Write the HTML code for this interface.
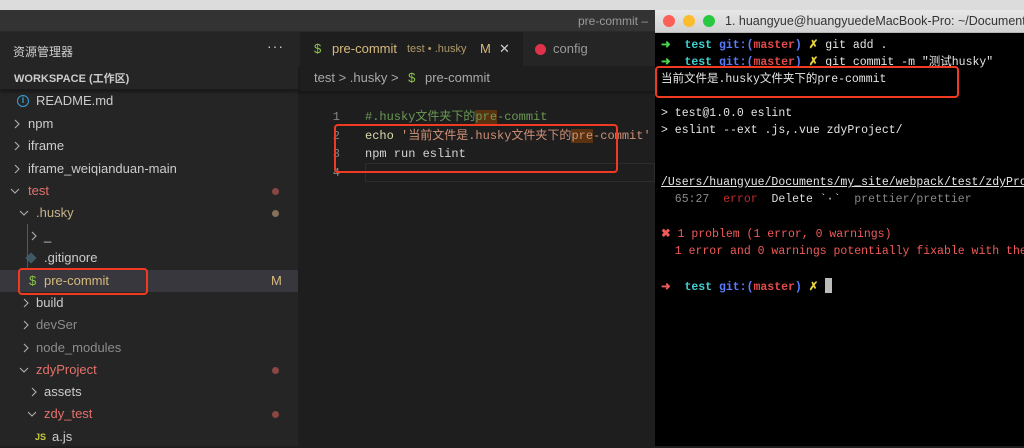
<!DOCTYPE html>
<html><head><meta charset="utf-8"><style>
*{margin:0;padding:0;box-sizing:border-box}
body{width:1024px;height:446px;overflow:hidden;background:#1e1e1e;font-family:"Liberation Sans","Noto Sans CJK SC",sans-serif;position:relative}
.abs{position:absolute}
.menu{left:0;top:0;width:1024px;height:10px;background:#dcdcdc}
.tbar{left:0;top:10px;width:655px;height:22px;background:#333333;border-bottom:1px solid #2a2a2a}
.side{left:0;top:32px;width:298px;height:414px;background:#252526}
.row{position:absolute;left:0;width:298px;height:22px;line-height:22px;font-size:13px;color:#cccccc;white-space:nowrap}
.chev{position:absolute;top:6px;width:10px;height:10px}
.dot{position:absolute;left:272px;top:8px;width:7px;height:7px;border-radius:50%}
.red{color:#e4716a}
.mono{font-family:"Liberation Mono","Noto Sans CJK SC",monospace}
.term{left:655px;top:10px;width:369px;height:436px;background:#000;overflow:hidden}
.tl{position:absolute;left:6px;font-size:11.5px;line-height:17px;white-space:pre;color:#e6e6e6}
</style></head><body>
<svg width="0" height="0" style="position:absolute"><defs>
<symbol id="cr" viewBox="0 0 10 10"><path d="M3 1 L7 5 L3 9" fill="none" stroke="#b0b0b0" stroke-width="1.1"/></symbol>
<symbol id="cd" viewBox="0 0 10 10"><path d="M1 3 L5 7 L9 3" fill="none" stroke="#b0b0b0" stroke-width="1.1"/></symbol>
</defs></svg>
<div class="abs menu"></div>
<div class="abs tbar"><span style="position:absolute;left:578px;top:4px;font-size:12px;color:#9a9a9a">pre-commit –</span></div>
<div class="abs side">
 <div style="position:absolute;left:13px;top:11px;font-size:12px;color:#cfcfcf">资源管理器</div>
 <div style="position:absolute;left:267px;top:6px;font-size:14px;color:#ccc;letter-spacing:1px">···</div>
 <div style="position:absolute;left:0;top:36px;width:298px;height:22px;line-height:22px;font-size:11px;font-weight:bold;color:#cccccc;padding-left:14px;border-bottom:1px solid #1b1b1b;box-shadow:0 2px 3px rgba(0,0,0,.4)">WORKSPACE (工作区)</div>
</div>
<div class="row" style="top:90px"><span style="position:absolute;left:17px;top:5px;width:12px;height:12px;border:1.5px solid #3a9fd6;border-radius:50%;font-size:9px;line-height:9px;color:#3a9fd6;text-align:center;font-weight:bold">i</span><span style="position:absolute;left:36px">README.md</span></div>
<div class="row" style="top:113px"><svg class="chev" style="left:12px"><use href="#cr"/></svg><span style="position:absolute;left:28px">npm</span></div>
<div class="row" style="top:135px"><svg class="chev" style="left:12px"><use href="#cr"/></svg><span style="position:absolute;left:28px">iframe</span></div>
<div class="row" style="top:158px"><svg class="chev" style="left:12px"><use href="#cr"/></svg><span style="position:absolute;left:28px">iframe_weiqianduan-main</span></div>
<div class="row red" style="top:180px"><svg class="chev" style="left:10px"><use href="#cd"/></svg><span style="position:absolute;left:28px">test</span><span class="dot" style="background:#8a4642"></span></div>
<div class="row" style="top:202px"><svg class="chev" style="left:19px"><use href="#cd"/></svg><span style="position:absolute;left:36px;color:#c8b48a">.husky</span><span class="dot" style="background:#85705a"></span></div>
<div class="row" style="top:225px"><svg class="chev" style="left:29px"><use href="#cr"/></svg><span style="position:absolute;left:44px">_</span></div>
<div class="row" style="top:247px"><span style="position:absolute;left:27px;top:7px;width:8px;height:8px;background:#3f5866;transform:rotate(45deg)"></span><span style="position:absolute;left:44px">.gitignore</span></div>
<div class="row" style="top:270px;background:#37373d"><span style="position:absolute;left:29px;color:#8bc34a">$</span><span style="position:absolute;left:44px;color:#d7ba7d">pre-commit</span><span style="position:absolute;left:271px;color:#d7ba7d">M</span></div>
<div class="abs" style="left:18px;top:268px;width:130px;height:27px;border:2px solid #f03a22;border-radius:4px"></div>
<div class="row" style="top:292px"><svg class="chev" style="left:21px"><use href="#cr"/></svg><span style="position:absolute;left:36px">build</span></div>
<div class="row" style="top:314px;color:#8c8c8c"><svg class="chev" style="left:21px"><use href="#cr"/></svg><span style="position:absolute;left:36px">devSer</span></div>
<div class="row" style="top:337px;color:#8c8c8c"><svg class="chev" style="left:21px"><use href="#cr"/></svg><span style="position:absolute;left:36px">node_modules</span></div>
<div class="row red" style="top:359px"><svg class="chev" style="left:19px"><use href="#cd"/></svg><span style="position:absolute;left:36px">zdyProject</span><span class="dot" style="background:#8a4642"></span></div>
<div class="row" style="top:381px"><svg class="chev" style="left:29px"><use href="#cr"/></svg><span style="position:absolute;left:44px">assets</span></div>
<div class="row red" style="top:403px"><svg class="chev" style="left:27px"><use href="#cd"/></svg><span style="position:absolute;left:44px">zdy_test</span><span class="dot" style="background:#8a4642"></span></div>
<div class="row" style="top:426px"><span style="position:absolute;left:35px;font-size:9px;font-weight:bold;color:#cbcb41">JS</span><span style="position:absolute;left:52px">a.js</span></div>
<div class="abs" style="left:27px;top:224px;width:1px;height:45px;background:#585858"></div>

<div class="abs" style="left:298px;top:32px;width:357px;height:34px;background:#252526"></div>
<div class="abs" style="left:300px;top:32px;width:223px;height:34px;background:#1e1e1e;font-size:13px;line-height:34px;white-space:nowrap">
 <span style="position:absolute;left:14px;color:#8bc34a">$</span><span style="position:absolute;left:32px;color:#d7ba7d">pre-commit</span><span style="position:absolute;left:107px;font-size:11px;color:#b09a6a">test • .husky</span><span style="position:absolute;left:180px;color:#d7ba7d">M</span><span style="position:absolute;left:199px;color:#ccc">✕</span></div>
<div class="abs" style="left:535px;top:44px;width:11px;height:11px;border-radius:50%;background:#e0324a"></div>
<div class="abs" style="left:553px;top:32px;font-size:13px;line-height:34px;color:#999">config</div>
<div class="abs" style="left:314px;top:70px;font-size:13px;color:#a9a9a9;white-space:nowrap">test &gt; .husky &gt; <span style="color:#8bc34a;margin:0 6px">$</span> pre-commit</div>
<div class="abs" style="left:298px;top:91px;width:357px;height:4px;background:linear-gradient(#151515,#1e1e1e)"></div>
<div class="abs mono" style="left:330px;top:108px;font-size:12px;line-height:18.5px;color:#858585;text-align:right;width:10px">1<br>2<br>3<br>4</div>
<div class="abs" style="left:365px;top:163px;width:290px;height:19px;border:1px solid #2c2c2c"></div>
<div class="abs mono" style="left:365px;top:108px;font-size:12px;line-height:18.5px;white-space:nowrap;color:#d4d4d4">
<span style="color:#6a9955">#.husky文件夹下的<span style="background:#5a3210">pre</span>-commit</span><br>
<span style="color:#dcdcaa">echo</span> <span style="color:#ce9178">'当前文件是.husky文件夹下的<span style="background:#5a3210">pre</span>-commit'</span><br>
npm run eslint</div>
<div class="abs" style="left:334px;top:124px;width:284px;height:49px;border:2px solid #f03a22;border-radius:4px"></div>

<div class="abs term">
 <div style="position:absolute;left:0;top:0;width:369px;height:23px;background:linear-gradient(#e8e8e8,#d2d2d2);border-bottom:1px solid #b5b5b5">
  <span style="position:absolute;left:8px;top:5px;width:12px;height:12px;border-radius:50%;background:#fc5f57"></span>
  <span style="position:absolute;left:28px;top:5px;width:12px;height:12px;border-radius:50%;background:#fdbc2e"></span>
  <span style="position:absolute;left:48px;top:5px;width:12px;height:12px;border-radius:50%;background:#28c840"></span>
  <span style="position:absolute;left:70px;top:4px;font-size:12.5px;color:#333;white-space:nowrap">1. huangyue@huangyuedeMacBook-Pro: ~/Documents</span></div>
 <div class="tl mono" style="top:27px"><b style="color:#4fd24f">➜</b>  <b style="color:#3fd0d0">test</b> <b style="color:#5a7cff">git:(</b><b style="color:#e34a4a">master</b><b style="color:#5a7cff">)</b> <b style="color:#e8d33f">✗</b> git add .</div>
 <div class="tl mono" style="top:44px"><b style="color:#4fd24f">➜</b>  <b style="color:#3fd0d0">test</b> <b style="color:#5a7cff">git:(</b><b style="color:#e34a4a">master</b><b style="color:#5a7cff">)</b> <b style="color:#e8d33f">✗</b> git commit -m "测试husky"</div>
 <div class="tl mono" style="top:61px">当前文件是.husky文件夹下的pre-commit</div>
 <div class="tl mono" style="top:95px">&gt; test@1.0.0 eslint</div>
 <div class="tl mono" style="top:112px">&gt; eslint --ext .js,.vue zdyProject/</div>
 <div class="tl mono" style="top:164px;text-decoration:underline">/Users/huangyue/Documents/my_site/webpack/test/zdyProject</div>
 <div class="tl mono" style="top:181px;color:#888">  65:27  <span style="color:#c02a2a">error</span>  <span style="color:#ddd">Delete `·`</span>  prettier/prettier</div>
 <div class="tl mono" style="top:216px;color:#f05a5a"><b>✖</b> 1 problem (1 error, 0 warnings)</div>
 <div class="tl mono" style="top:233px;color:#f05a5a">  1 error and 0 warnings potentially fixable with the</div>
 <div class="tl mono" style="top:268px"><b style="color:#f05a5a">➜</b>  <b style="color:#3fd0d0">test</b> <b style="color:#5a7cff">git:(</b><b style="color:#e34a4a">master</b><b style="color:#5a7cff">)</b> <b style="color:#e8d33f">✗</b> <span style="display:inline-block;width:7px;height:15px;background:#bbb;vertical-align:-3px"></span></div>
 <div style="position:absolute;left:0;top:56px;width:304px;height:32px;border:2px solid #f03a22;border-radius:4px"></div>
</div>
</body></html>
